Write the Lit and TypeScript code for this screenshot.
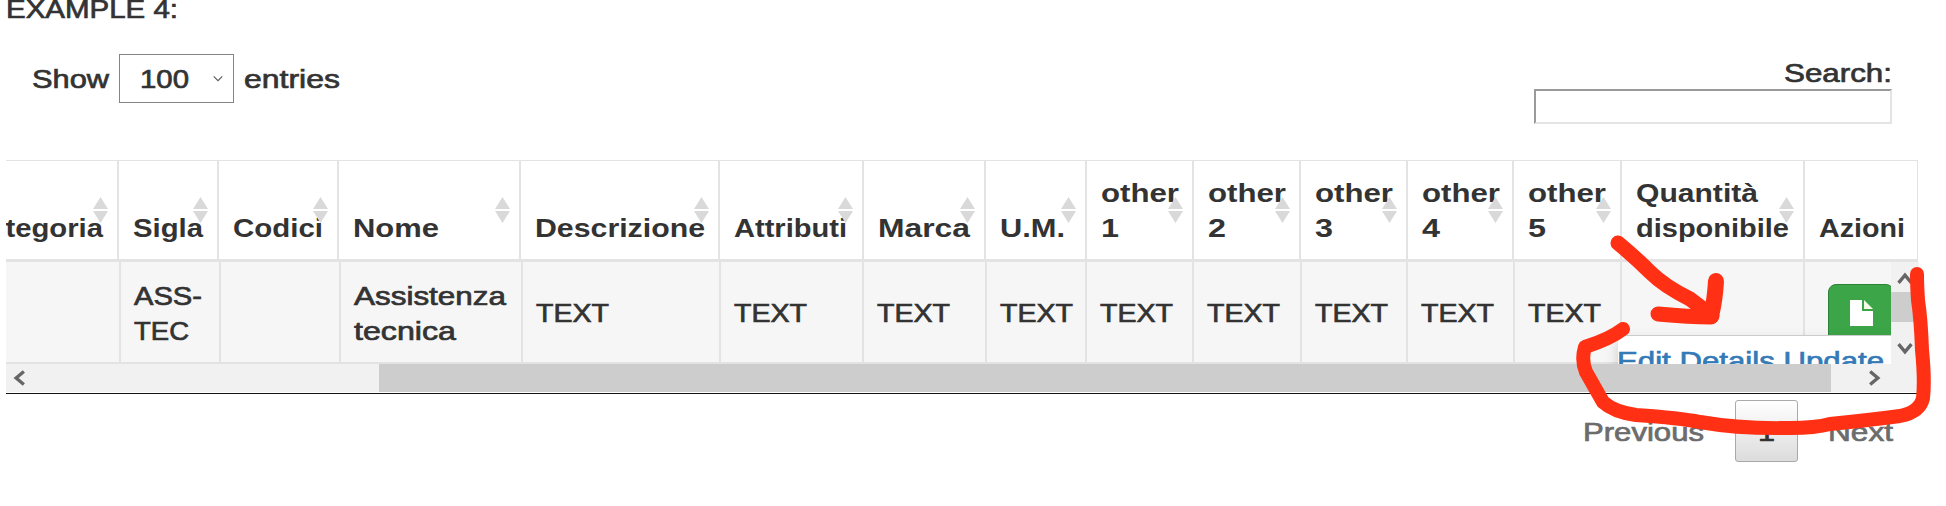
import { LitElement, css, html } from 'lit';
import { customElement } from 'lit/decorators.js';

type Line = [text: string, width: number];

interface HeadCol {
  width: number;
  lines: Line[];
  sort?: boolean;
}

// the source screenshot was stretched sideways, so each text gets its measured width
const line = ([text, width]: Line, cls = '') =>
  html`<svg class="line ${cls}" width=${width} height="35"><text x="0" y="25" textLength=${width} lengthAdjust="spacingAndGlyphs">${text}</text></svg>`;

const headCols: HeadCol[] = [
  { width: 165, lines: [['Categoria', 135]], sort: true },
  { width: 100, lines: [['Sigla', 70]], sort: true },
  { width: 120, lines: [['Codici', 90]], sort: true },
  { width: 182, lines: [['Nome', 86]], sort: true },
  { width: 199, lines: [['Descrizione', 170]], sort: true },
  { width: 144, lines: [['Attributi', 113]], sort: true },
  { width: 122, lines: [['Marca', 92]], sort: true },
  { width: 101, lines: [['U.M.', 65]], sort: true },
  { width: 107, lines: [['other', 78], ['1', 18]], sort: true },
  { width: 107, lines: [['other', 78], ['2', 18]], sort: true },
  { width: 107, lines: [['other', 78], ['3', 18]], sort: true },
  { width: 106, lines: [['other', 78], ['4', 18]], sort: true },
  { width: 108, lines: [['other', 78], ['5', 18]], sort: true },
  { width: 183, lines: [['Quantità', 122], ['disponibile', 153]], sort: true },
  { width: 115, lines: [['Azioni', 86]] }
];

const TEXT: Line[] = [['TEXT', 73]];

const bodyCols: { width: number; lines: Line[] }[] = [
  { width: 167, lines: [] },
  { width: 100, lines: [['ASS-', 68], ['TEC', 55]] },
  { width: 120, lines: [] },
  { width: 182, lines: [['Assistenza', 152], ['tecnica', 102]] },
  { width: 198, lines: TEXT },
  { width: 143, lines: TEXT },
  { width: 123, lines: TEXT },
  { width: 100, lines: TEXT },
  { width: 107, lines: TEXT },
  { width: 108, lines: TEXT },
  { width: 106, lines: TEXT },
  { width: 107, lines: TEXT },
  { width: 107, lines: TEXT },
  { width: 183, lines: [] }
];

@customElement('app-root')
export class AppRoot extends LitElement {
  static styles = css`
    :host {
      display: block;
      position: relative;
      height: 506px;
      overflow: hidden;
      background: #fff;
      font-family: 'Liberation Sans', Arial, sans-serif;
      color: #333;
    }

    .line {
      display: block;
      overflow: visible;
    }

    .line text {
      font-family: 'Liberation Sans', Arial, sans-serif;
      font-size: 26px;
      fill: #333;
      stroke: #333;
      stroke-width: 0.7px;
    }

    .line.bold text {
      font-weight: 700;
      stroke: none;
    }

    .line.muted text {
      fill: #6c6c6c;
      stroke: #6c6c6c;
    }

    .line.link text {
      fill: #337ab7;
      stroke: #337ab7;
    }

    .page {
      width: 1913px;
      margin-left: 6px;
    }

    .title {
      height: 54px;
      margin-top: -7px;
      margin-bottom: 7px;
    }

    .controls {
      display: flex;
      justify-content: space-between;
      align-items: flex-start;
      height: 70px;
      padding: 0 27px 0 26px;
    }

    .length {
      display: flex;
      align-items: center;
      height: 49px;
    }

    .length .line {
      margin-top: 4px;
    }

    .select {
      display: flex;
      align-items: center;
      justify-content: space-between;
      box-sizing: border-box;
      width: 115px;
      height: 49px;
      margin: 0 10px;
      padding: 0 9px 0 20px;
      border: 1px solid #848484;
    }

    .search {
      display: flex;
      flex-direction: column;
      align-items: flex-end;
      padding-top: 3px;
    }

    .input {
      box-sizing: border-box;
      width: 358px;
      height: 35px;
      margin-top: -3px;
      border: 2px solid;
      border-color: #9a9a9a #e4e4e4 #e4e4e4 #9a9a9a;
    }

    .head {
      margin-top: 36px;
      overflow: hidden;
    }

    table {
      table-layout: fixed;
      border-collapse: separate;
      border-spacing: 0;
      margin-left: -54px;
    }

    th {
      position: relative;
      box-sizing: border-box;
      height: 102px;
      padding: 0 0 12px 14px;
      vertical-align: bottom;
      text-align: left;
      border-top: 1px solid #e3e3e3;
      border-left: 2px solid #e3e3e3;
      border-bottom: 3px solid #e3e3e3;
    }

    th:last-child {
      border-right: 1px solid #e3e3e3;
    }

    .sort {
      position: absolute;
      top: 36px;
      right: 9px;
      width: 15px;
      height: 26px;
    }

    .sort::before,
    .sort::after {
      content: '';
      position: absolute;
      left: 0;
      width: 15px;
      height: 12px;
      background: #d9d9d9;
    }

    .sort::before {
      top: 0;
      clip-path: polygon(50% 0, 100% 100%, 0 100%);
    }

    .sort::after {
      bottom: 0;
      clip-path: polygon(0 0, 100% 0, 50% 100%);
    }

    .scroll {
      display: flex;
      padding-bottom: 1px;
      border-bottom: 1px solid #111;
    }

    .main {
      width: 1885px;
    }

    .viewport {
      position: relative;
      height: 102px;
      overflow: hidden;
    }

    td {
      box-sizing: border-box;
      height: 102px;
      padding: 7px 0 2px 13px;
      background: #f6f6f6;
      border-left: 2px solid #e3e3e3;
      border-bottom: 2px solid #e3e3e3;
      vertical-align: middle;
    }

    td.actions {
      padding: 2px 0 0 23px;
    }

    .btn {
      display: flex;
      align-items: center;
      justify-content: center;
      box-sizing: border-box;
      width: 66px;
      height: 58px;
      background: #3ca548;
      border: 1px solid #2b8238;
      border-radius: 8px;
    }

    .menu {
      position: absolute;
      left: 1612px;
      right: -10px;
      top: 73px;
      height: 60px;
      box-sizing: border-box;
      padding: 9px 0 0 0;
      background: #fff;
      border-top: 1px solid #ccc;
      box-shadow: 0 6px 12px rgba(0, 0, 0, 0.175);
    }

    .menu .line {
      margin-left: -1px;
    }

    .hbar {
      position: relative;
      display: flex;
      align-items: center;
      justify-content: space-between;
      box-sizing: border-box;
      height: 28px;
      padding: 0 8px 0 5px;
      background: #f1f1f1;
    }

    .hbar svg {
      position: relative;
    }

    .hthumb {
      position: absolute;
      left: 373px;
      width: 1452px;
      top: 0;
      bottom: 0;
      background: #cdcdcd;
    }

    .vbar {
      display: flex;
      flex-direction: column;
      align-items: center;
      box-sizing: border-box;
      width: 28px;
      height: 130px;
      padding-top: 8px;
      background: #f1f1f1;
    }

    .vthumb {
      align-self: stretch;
      height: 30px;
      margin: 4px 0 17px;
      background: #cdcdcd;
    }

    .pager {
      display: flex;
      justify-content: flex-end;
      align-items: flex-start;
      padding-right: 26px;
      margin-top: 6px;
    }

    .pager .line {
      margin-top: 16px;
    }

    .current {
      display: flex;
      justify-content: center;
      box-sizing: border-box;
      width: 63px;
      height: 62px;
      margin: 0 30px 0 31px;
      border: 1px solid #a9a9a9;
      border-radius: 3px;
      background: linear-gradient(to bottom, #fff, #dcdcdc);
    }

    .current .line {
      margin-top: 15px;
    }

    .ink {
      position: absolute;
      inset: 0;
      pointer-events: none;
    }
  `;

  private chevron(points: string, size = 18, color = '#666', weight = 2.6) {
    return html`<svg width=${size} height=${size} viewBox="0 0 14 14" fill="none">
      <polyline points=${points} stroke=${color} stroke-width=${weight}></polyline>
    </svg>`;
  }

  private renderHead() {
    return html`<div class="head">
      <table style="width:${headCols.reduce((sum, col) => sum + col.width, 0)}px">
        <colgroup>${headCols.map((col) => html`<col style="width:${col.width}px" />`)}</colgroup>
        <tr>
          ${headCols.map(
            (col) => html`<th>
              ${col.lines.map((l) => line(l, 'bold'))}
              ${col.sort ? html`<span class="sort"></span>` : null}
            </th>`
          )}
        </tr>
      </table>
    </div>`;
  }

  private renderBody() {
    return html`<div class="viewport">
      <table style="width:${bodyCols.reduce((sum, col) => sum + col.width, 0) + 116}px">
        <colgroup>
          ${bodyCols.map((col) => html`<col style="width:${col.width}px" />`)}
          <col style="width:116px" />
        </colgroup>
        <tr>
          ${bodyCols.map((col) => html`<td>${col.lines.map((l) => line(l))}</td>`)}
          <td class="actions">
            <div class="btn">
              <svg width="23" height="26" viewBox="0 0 23 26">
                <path d="M0 0H12V11H23V26H0Z" fill="#fff"></path>
                <path d="M14 0L23 9H14Z" fill="#f6fbe6"></path>
              </svg>
            </div>
          </td>
        </tr>
      </table>
      <div class="menu">${line(['Edit Details Update', 267], 'link')}</div>
    </div>`;
  }

  render() {
    return html`
      <div class="page">
        <div class="title">${line(['EXAMPLE 4:', 172])}</div>
        <div class="controls">
          <div class="length">
            ${line(['Show', 77])}
            <div class="select">
              ${line(['100', 49])}
              ${this.chevron('2,4 7,9 12,4', 12, '#555', 1.2)}
            </div>
            ${line(['entries', 96])}
          </div>
          <div class="search">
            ${line(['Search:', 108])}
            <div class="input"></div>
          </div>
        </div>
        ${this.renderHead()}
        <div class="scroll">
          <div class="main">
            ${this.renderBody()}
            <div class="hbar">
              <div class="hthumb"></div>
              ${this.chevron('10,2 4,7 10,12')}
              ${this.chevron('4,2 10,7 4,12')}
            </div>
          </div>
          <div class="vbar">
            ${this.chevron('2,10 7,4 12,10')}
            <div class="vthumb"></div>
            ${this.chevron('2,4 7,10 12,4')}
          </div>
        </div>
        <div class="pager">
          ${line(['Previous', 121], 'muted')}
          <div class="current">${line(['1', 17])}</div>
          ${line(['Next', 65], 'muted')}
        </div>
      </div>
      <svg class="ink" width="1946" height="506" fill="none" stroke="#ff3014" stroke-linecap="round" stroke-linejoin="round">
        <path stroke-width="15" d="M1618 243Q1636 258 1650 272T1690 299Q1702 308 1712 316"></path>
        <path stroke-width="15" d="M1658 314Q1690 317 1711 317"></path>
        <path stroke-width="16" d="M1716 281Q1715 300 1711 316"></path>
        <path
          stroke-width="14"
          d="M1623 329Q1610 339 1585 347Q1581 360 1586 372Q1594 386 1603 402Q1614 412 1636 415Q1680 418 1700 422Q1740 429 1790 428Q1815 428 1830 424Q1870 420 1900 416Q1920 412 1923 398Q1925 380 1922 350Q1921 320 1918 300Q1917 285 1917 274"
        ></path>
      </svg>
    `;
  }
}

declare global {
  interface HTMLElementTagNameMap {
    'app-root': AppRoot;
  }
}
